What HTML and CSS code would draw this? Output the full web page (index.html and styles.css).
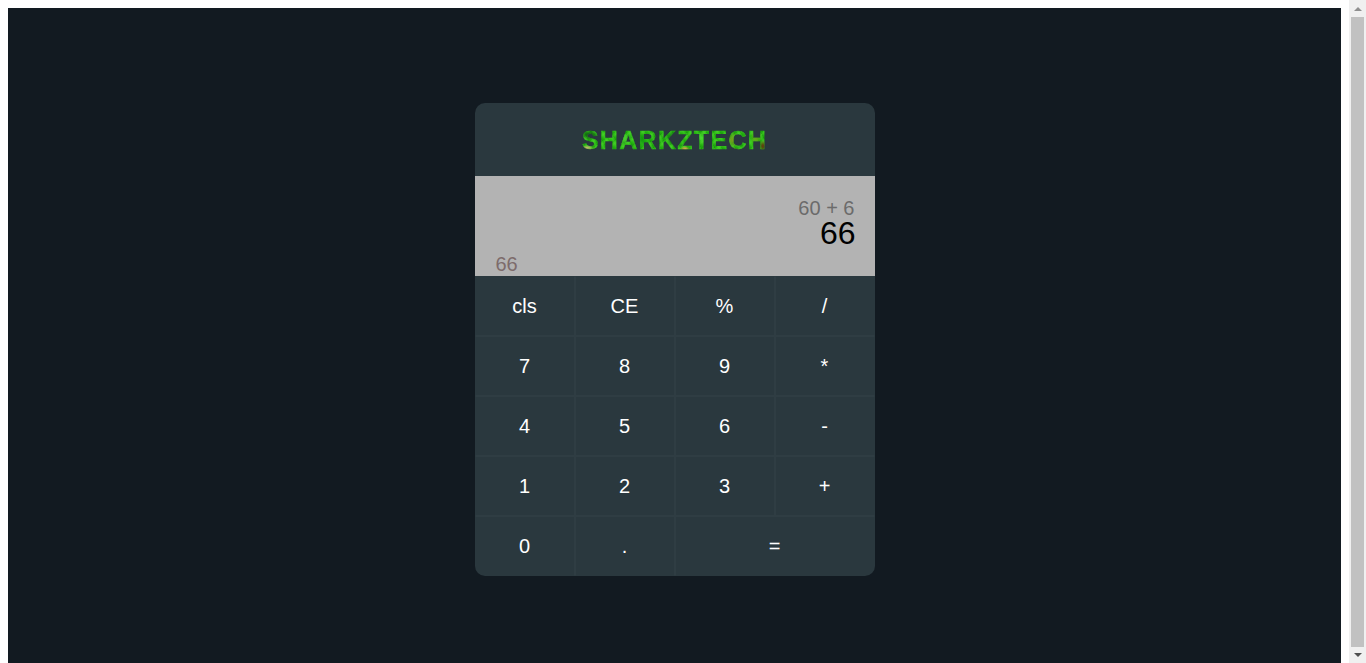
FILE: index.html
```html
<!DOCTYPE html>
<html>
<head>
	<meta http-equiv="Content-Type" content="text/html; charset=utf-8" />
	<title>Calculator | Sharkztech</title>
	<link rel="stylesheet" href="styles.css">
</head>
<body>
<div class="page">
	<div class="stage">
		<div class="calculator">
			<div class="brand">
				<span class="brand_text">SHARKZTECH</span>
			</div>
			<div class="screen">
				<div class="previous">60 + 6</div>
				<div class="current">66</div>
				<div class="history">66</div>
			</div>
			<div class="keys">
				<button class="key">cls</button>
				<button class="key">CE</button>
				<button class="key">%</button>
				<button class="key">/</button>
				<button class="key">7</button>
				<button class="key">8</button>
				<button class="key">9</button>
				<button class="key">*</button>
				<button class="key">4</button>
				<button class="key">5</button>
				<button class="key">6</button>
				<button class="key">-</button>
				<button class="key">1</button>
				<button class="key">2</button>
				<button class="key">3</button>
				<button class="key">+</button>
				<button class="key">0</button>
				<button class="key">.</button>
				<button class="key key_wide">=</button>
			</div>
		</div>
	</div>
	<div class="scrollbar">
		<div class="arrow_up"></div>
		<div class="thumb"></div>
		<div class="arrow_down"></div>
	</div>
</div>
</body>
</html>
```

FILE: styles.css
```css
html, body{
	margin: 0;
	height: 100%;
	overflow: hidden;
	background-color: #fff;
	font-family: "Liberation Sans", Arial, sans-serif;
}

.page{
	display: flex;
	height: 663px;
}

.stage{
	flex: 1;
	margin: 8px 8px 0px 8px;
	background-color: #121a21;
	padding-top: 95px;
	display: flex;
	justify-content: center;
	align-items: flex-start;
}

.calculator{
	width: 400px;
	background-color: #2a383e;
	border-radius: 10px;
	overflow: hidden;
}

.brand{
	height: 73px;
	display: flex;
	align-items: center;
	justify-content: center;
}

/* leafy picture clipped to the letters */
.brand_text{
	font-size: 25px;
	font-weight: bold;
	letter-spacing: 1.3px;
	line-height: 28px;
	margin-top: 1px;
	color: transparent;
	-webkit-text-stroke: 0.4px transparent;
	background-color: #26b810;
	background-image:
		radial-gradient(ellipse 7px 3px at 5px 22px, #d8b878, transparent),
		radial-gradient(ellipse 9px 5px at 8px 9px, #0c4a14, transparent),
		radial-gradient(ellipse 5px 3px at 103px 23px, #f09a50, transparent),
		radial-gradient(ellipse 7px 8px at 91px 12px, #0f6a14, transparent),
		radial-gradient(ellipse 7px 2px at 152px 24px, #e07a22, transparent),
		radial-gradient(ellipse 8px 8px at 151px 14px, #7d9a20, transparent),
		radial-gradient(ellipse 4px 6px at 181px 20px, #6a3010, transparent),
		radial-gradient(ellipse 6px 8px at 174px 12px, #68a018, transparent),
		radial-gradient(ellipse 8px 8px at 60px 14px, #139a10, transparent),
		radial-gradient(ellipse 9px 6px at 120px 12px, #4cd834, transparent),
		radial-gradient(ellipse 8px 6px at 42px 13px, #4cc834, transparent),
		radial-gradient(ellipse 8px 6px at 165px 14px, #38d020, transparent),
		repeating-linear-gradient(62deg, rgba(10,110,10,0.25) 0px, transparent 2px, rgba(100,230,70,0.3) 4px, transparent 6px),
		repeating-linear-gradient(-35deg, rgba(0,90,10,0.2) 0px, transparent 3px, rgba(120,240,70,0.25) 5px, transparent 7px);
	-webkit-background-clip: text;
	background-clip: text;
}

.screen{
	height: 100px;
	box-sizing: border-box;
	padding: 21px 19px 0px 21px;
	background-color: #b3b3b3;
	display: flex;
	flex-direction: column;
	align-items: flex-end;
}

.previous{
	font-size: 20px;
	line-height: 22px;
	margin-right: 1px;
	color: #6b6b6b;
}

.current{
	font-size: 32px;
	line-height: 28px;
	color: #000;
}

.history{
	align-self: flex-start;
	margin-top: auto;
	font-size: 20px;
	line-height: 24px;
	color: #7d6b6b;
}

.keys{
	display: grid;
	grid-template-columns: repeat(4, 100px);
	grid-auto-rows: 60px;
}

.key{
	background-color: transparent;
	border: 1px solid #2f3d43;
	color: #fff;
	font-family: inherit;
	font-size: 20px;
	padding: 0px;
}

.key:nth-child(-n+4){
	border-top-color: transparent;
}

.key:nth-child(4n+1){
	border-left-color: transparent;
}

.key:nth-child(4n),
.key_wide{
	border-right-color: transparent;
}

.key:nth-child(n+17){
	border-bottom-color: transparent;
}

.key_wide{
	grid-column: span 2;
}

.scrollbar{
	width: 17px;
	background-color: #f0f0f0;
	display: flex;
	flex-direction: column;
	align-items: center;
	justify-content: space-between;
	padding: 7px 0px 6px 0px;
	box-sizing: border-box;
}

.thumb{
	width: 13px;
	flex: 1;
	margin: 6px 0px 6px 0px;
	background-color: #c1c1c1;
}

.arrow_up{
	width: 0px;
	border-left: 4px solid transparent;
	border-right: 4px solid transparent;
	border-bottom: 4px solid #8f8f8f;
}

.arrow_down{
	width: 0px;
	border-left: 4px solid transparent;
	border-right: 4px solid transparent;
	border-top: 4px solid #505050;
}
```
